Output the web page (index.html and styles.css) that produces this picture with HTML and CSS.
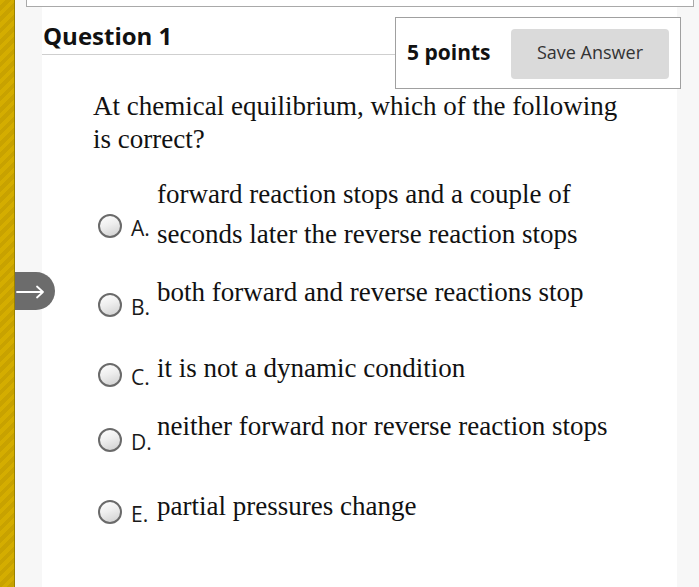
FILE: index.html
```html
<!DOCTYPE html>
<html lang="en">
<head>
<meta charset="utf-8">
<title>Question 1</title>
<link rel="stylesheet" href="styles.css">
</head>
<body>
<div class="stripe"></div>
<div class="tab">
  <svg width="55" height="38" viewBox="0 0 55 38"><path d="M17 20 H43 M37 14.5 L43 20 L37 25.5" fill="none" stroke="#fff" stroke-width="1.8" stroke-linecap="round" stroke-linejoin="round"/></svg>
</div>
<div class="main">
  <div class="prev-card"></div>
  <div class="question">
    <div class="q-header">
      <h2 class="q-title">Question 1</h2>
      <div class="points-box">
        <span class="points">5 points</span>
        <button class="save-btn">Save Answer</button>
      </div>
    </div>
    <p class="q-text">At chemical equilibrium, which of the following is correct?</p>
    <div class="choices">
      <div class="choice choice-a">
        <div class="mark"><span class="radio"></span><span class="letter">A.</span></div>
        <div class="text">forward reaction stops and a couple of seconds later the reverse reaction stops</div>
      </div>
      <div class="choice choice-b">
        <div class="mark"><span class="radio"></span><span class="letter">B.</span></div>
        <div class="text">both forward and reverse reactions stop</div>
      </div>
      <div class="choice choice-c">
        <div class="mark"><span class="radio"></span><span class="letter">C.</span></div>
        <div class="text">it is not a dynamic condition</div>
      </div>
      <div class="choice choice-d">
        <div class="mark"><span class="radio"></span><span class="letter">D.</span></div>
        <div class="text">neither forward nor reverse reaction stops</div>
      </div>
      <div class="choice choice-e">
        <div class="mark"><span class="radio"></span><span class="letter">E.</span></div>
        <div class="text">partial pressures change</div>
      </div>
    </div>
  </div>
</div>
</body>
</html>
```

FILE: styles.css
```css
* { box-sizing: border-box; }
html, body { margin: 0; padding: 0; }
body {
  background: #f7f7f7;
  display: flex;
  min-height: 587px;
  overflow: hidden;
  position: relative;
  font-family: "Open Sans", sans-serif;
  color: #111;
}
.stripe {
  width: 15px;
  flex: none;
  position: relative;
  z-index: 2;
  background: repeating-linear-gradient(135deg, #d4ad00 0 4px, #c8a200 4px 8px);
  border-right: 1px solid #9a8200;
}
.tab {
  position: absolute;
  left: 0;
  top: 272px;
  width: 55px;
  height: 38px;
  background: #6c6c6c;
  border-radius: 0 19px 19px 0;
  z-index: 1;
}
.tab svg { display: block; }
.main {
  flex: 1;
  display: flex;
  flex-direction: column;
}
.prev-card {
  margin-left: 11px;
  width: 668px;
  height: 7px;
  background: #fff;
  border: 1px solid #a9a9a9;
  border-top: none;
}
.question {
  margin-left: 27px;
  width: 635px;
  flex: 1;
  background: #fff;
}
.q-header {
  display: flex;
  align-items: flex-start;
}
.q-title {
  flex: 1;
  margin: 13px 0 0 0;
  padding: 0 0 2px 1px;
  font-size: 24px;
  line-height: 32px;
  font-weight: 700;
  color: #111;
  border-bottom: 1px solid #cfcfcf;
}
.points-box {
  width: 286px;
  height: 72px;
  margin-top: 10px;
  margin-right: -4px;
  border: 1px solid #a0a0a0;
  background: #fff;
  display: flex;
  align-items: center;
  justify-content: space-between;
  padding: 2px 11px 0 11px;
}
.points {
  font-size: 21px;
  font-weight: 700;
  line-height: 28px;
  margin-bottom: 4px;
  color: #111;
}
.save-btn {
  width: 158px;
  height: 50px;
  border: none;
  border-radius: 4px;
  background: #dadada;
  font-family: "Open Sans", sans-serif;
  font-size: 18px;
  color: #333;
  padding: 0 0 4px 0;
}
.q-text {
  margin: 1px 0 0 51px;
  width: 545px;
  font-family: "Liberation Serif", "Times New Roman", serif;
  font-size: 27px;
  line-height: 33px;
  color: #111;
}
.choices {
  margin: 18px 0 0 56px;
  display: flex;
  flex-direction: column;
}
.choice {
  display: flex;
  align-items: flex-start;
}
.mark {
  width: 59px;
  flex: none;
  display: flex;
  align-items: flex-end;
}
.radio {
  width: 24px;
  height: 24px;
  flex: none;
  border-radius: 50%;
  border: 2px solid #6a6a6a;
  background: linear-gradient(160deg, #ffffff 0%, #eeeeee 45%, #cfcfcf 100%);
}
.letter {
  margin-left: 9px;
  font-size: 21px;
  line-height: 20px;
  color: #1a1a1a;
}
.text {
  width: 465px;
  font-family: "Liberation Serif", "Times New Roman", serif;
  font-size: 27px;
  line-height: 40px;
  color: #111;
}
.choice-a .mark { margin-top: 40px; }
.choice-b { margin-top: 18px; }
.choice-b .mark { margin-top: 21px; }
.choice-c { margin-top: 31px; }
.choice-c .mark { margin-top: 15px; }
.choice-d { margin-top: 18px; }
.choice-d .mark { margin-top: 22px; }
.choice-e { margin-top: 34px; }
.choice-e .mark { margin-top: 14px; }
```
